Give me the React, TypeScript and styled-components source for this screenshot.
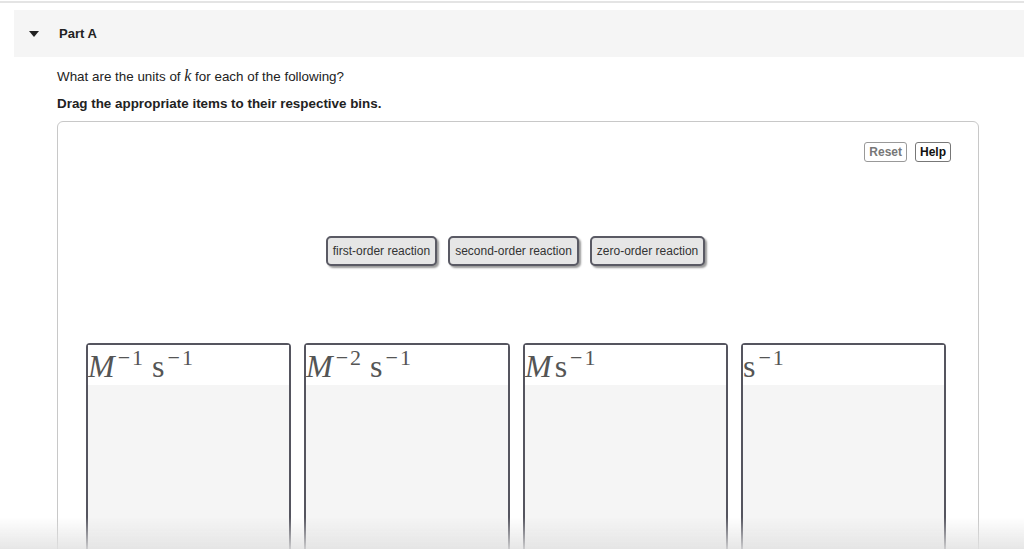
import styled, { createGlobalStyle } from "styled-components";

const GlobalStyle = createGlobalStyle`
    body {
        margin: 0;
        font-family: "Liberation Sans", Arial, sans-serif;
        color: #222;
        background: #fff;
        overflow: hidden;
    }
`

const Page = styled.div`
    height: 549px;
    border-top: 2px solid #e4e4e4;
    margin-top: 1px;
    box-sizing: border-box;
`

const PartHeader = styled.div`
    margin: 7px 0 0 14px;
    height: 47px;
    background: #f5f5f5;
    display: flex;
    align-items: center;
    padding-left: 15px;
    gap: 20px;
    font-size: 13px;
    font-weight: bold;
    color: #222;
`

const Caret = styled.span`
    width: 0;
    height: 0;
    border-left: 5px solid transparent;
    border-right: 5px solid transparent;
    border-top: 6px solid #222;
`

const Body = styled.div`
    padding: 11px 45px 0 57px;
`

const Question = styled.p<{ $bold?: boolean }>`
    margin: 0 0 ${p => (p.$bold ? "10px" : "12px")};
    font-size: 13.4px;
    font-weight: ${p => (p.$bold ? "bold" : "normal")};
    line-height: 15px;
`

const MathVar = styled.i`
    font-family: "Liberation Serif", "Times New Roman", serif;
    font-size: 16px;
`

const DragArea = styled.div`
    border: 1px solid #c8c8c8;
    border-radius: 6px;
    height: 460px;
    box-sizing: border-box;
    padding: 20px 27px 0 28px;
`

const Toolbar = styled.div`
    display: flex;
    justify-content: flex-end;
    gap: 8px;
`

const ToolButton = styled.button<{ $muted?: boolean }>`
    font-family: "Liberation Sans", Arial, sans-serif;
    font-size: 12px;
    font-weight: bold;
    color: ${p => (p.$muted ? "#777" : "#111")};
    background: #fff;
    border: 1px solid ${p => (p.$muted ? "#999" : "#777")};
    border-radius: 3px;
    padding: 2px 4px;
    height: 20px;
    line-height: 14px;
`

const ItemRow = styled.div`
    display: flex;
    justify-content: center;
    gap: 11px;
    margin-top: 74px;
    padding-right: 6px;
`

const Item = styled.div`
    font-size: 12px;
    color: #333;
    background: #e6e6e6;
    border: 2px solid #5a5a64;
    border-radius: 5px;
    padding: 6px 5px;
    line-height: 14px;
    box-shadow: 2px 2px 2px #9a9a9a;
`

const Bins = styled.div`
    display: grid;
    grid-template-columns: 205px 206px 205px 205px;
    gap: 13px;
    margin-top: 77px;
`

const Bin = styled.div`
    border: 2px solid #55555f;
    border-bottom: none;
    border-radius: 4px 4px 0 0;
    height: 220px;
    display: flex;
    flex-direction: column;
`

const BinLabel = styled.div`
    height: 40px;
    background: #fff;
    font-family: "Liberation Serif", "Times New Roman", serif;
    font-size: 32px;
    color: #555;
    line-height: 42px;
    white-space: nowrap;
`

const BinDrop = styled.div`
    flex: 1;
    background: #f5f5f5;
`

const Unit = styled.span<{ $italic?: boolean }>`
    font-style: ${p => (p.$italic ? "italic" : "normal")};
    margin-right: ${p => (p.$italic ? "3px" : "0")};
`

const Sup = styled.sup`
    font-style: normal;
    font-size: 22px;
    vertical-align: 12px;
    line-height: 0;
    letter-spacing: 2px;
    margin-left: 3px;
    margin-right: 4px;
`

const BottomFade = styled.div`
    position: fixed;
    left: 0;
    right: 0;
    bottom: 0;
    height: 32px;
    background: linear-gradient(to bottom, rgba(230, 230, 230, 0), rgba(226, 226, 226, 0.85));
    pointer-events: none;
`

const bins = [
    [{ t: "M", i: true, s: "−1" }, { t: "s", s: "−1" }],
    [{ t: "M", i: true, s: "−2" }, { t: "s", s: "−1" }],
    [{ t: "M", i: true }, { t: "s", s: "−1" }],
    [{ t: "s", s: "−1" }],
]

export default function App() {
    return <>
        <GlobalStyle />
        <Page>
            <PartHeader>
                <Caret />
                Part A
            </PartHeader>
            <Body>
                <Question>What are the units of <MathVar>k</MathVar> for each of the following?</Question>
                <Question $bold>Drag the appropriate items to their respective bins.</Question>
                <DragArea>
                    <Toolbar>
                        <ToolButton $muted>Reset</ToolButton>
                        <ToolButton>Help</ToolButton>
                    </Toolbar>
                    <ItemRow>
                        <Item>first-order reaction</Item>
                        <Item>second-order reaction</Item>
                        <Item>zero-order reaction</Item>
                    </ItemRow>
                    <Bins>
                        {bins.map((parts, key) => <Bin key={key}>
                            <BinLabel>
                                {parts.map((p, k) => <Unit key={k} $italic={p.i}>
                                    {p.t}{p.s && <Sup>{p.s}</Sup>}
                                </Unit>)}
                            </BinLabel>
                            <BinDrop />
                        </Bin>)}
                    </Bins>
                </DragArea>
            </Body>
        </Page>
        <BottomFade />
    </>
}
